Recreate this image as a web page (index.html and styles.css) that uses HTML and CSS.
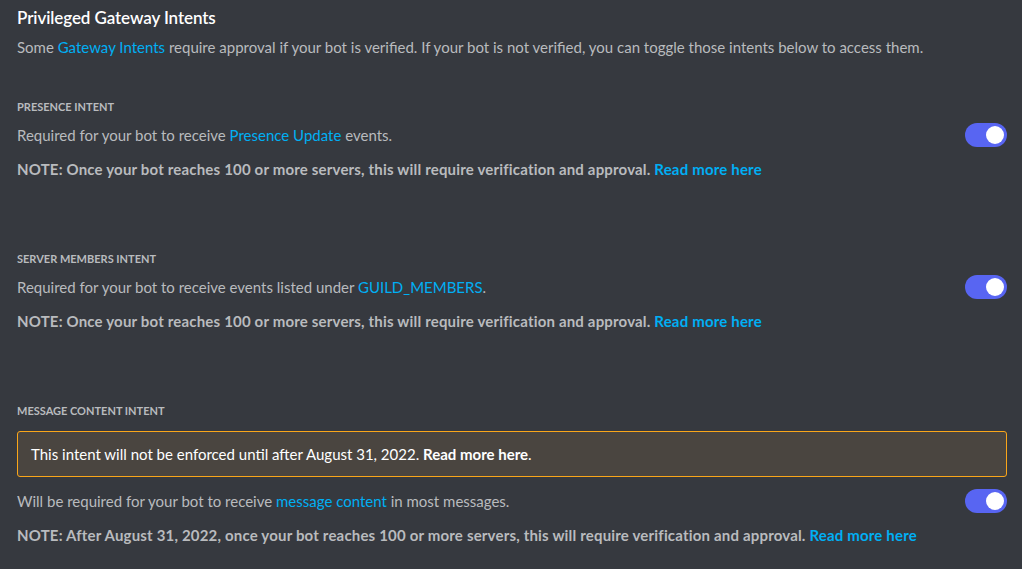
FILE: index.html
```html
<!DOCTYPE html>
<html>
<head>
<meta charset="utf-8">
<link rel="stylesheet" href="styles.css">
</head>
<body>
<main class="page">
  <header class="intro">
    <h2 class="title">Privileged Gateway Intents</h2>
    <p class="desc">Some <a class="link">Gateway Intents</a> require approval if your bot is verified. If your bot is not verified, you can toggle those intents below to access them.</p>
  </header>

  <section class="intent">
    <h3 class="label">PRESENCE INTENT</h3>
    <div class="row">
      <p class="desc">Required for your bot to receive <a class="link">Presence Update</a> events.</p>
      <span class="toggle"><span class="knob"></span></span>
    </div>
    <p class="note">NOTE: Once your bot reaches 100 or more servers, this will require verification and approval. <a class="link">Read more here</a></p>
  </section>

  <section class="intent">
    <h3 class="label">SERVER MEMBERS INTENT</h3>
    <div class="row">
      <p class="desc">Required for your bot to receive events listed under <a class="link">GUILD_MEMBERS</a>.</p>
      <span class="toggle"><span class="knob"></span></span>
    </div>
    <p class="note">NOTE: Once your bot reaches 100 or more servers, this will require verification and approval. <a class="link">Read more here</a></p>
  </section>

  <section class="intent intent-last">
    <h3 class="label">MESSAGE CONTENT INTENT</h3>
    <div class="warning">This intent will not be enforced until after August 31, 2022. <strong class="strong">Read more here</strong>.</div>
    <div class="row">
      <p class="desc">Will be required for your bot to receive <a class="link">message content</a> in most messages.</p>
      <span class="toggle"><span class="knob"></span></span>
    </div>
    <p class="note">NOTE: After August 31, 2022, once your bot reaches 100 or more servers, this will require verification and approval. <a class="link">Read more here</a></p>
  </section>
</main>
</body>
</html>
```

FILE: styles.css
```css
html, body {
  margin: 0;
  padding: 0;
  background: #36393f;
}
body {
  font-family: Lato, "Noto Sans", sans-serif;
  color: #b9bbbe;
}
.page {
  padding: 6px 15px 0 17px;
  display: flex;
  flex-direction: column;
  gap: 42px;
}
.intro {
  display: flex;
  flex-direction: column;
  gap: 7px;
}
.title {
  margin: 0;
  font-size: 17px;
  line-height: 24px;
  font-weight: 600;
  letter-spacing: -0.1px;
  color: #ffffff;
}
.desc {
  margin: 0;
  font-size: 15px;
  line-height: 20px;
  color: #b9bbbe;
}
.link {
  color: #00aff4;
  text-decoration: none;
}
.intent {
  display: flex;
  flex-direction: column;
}
.intent + .intent {
  margin-top: 30px;
}
.label {
  margin: 0 0 8px;
  font-size: 11px;
  line-height: 16px;
  font-weight: 700;
  color: #b9bbbe;
}
.intent-last .label {
  margin-bottom: 12px;
}
.row {
  display: flex;
  align-items: center;
  justify-content: space-between;
  height: 24px;
}
.note {
  margin: 12px 0 0;
  font-size: 15px;
  line-height: 20px;
  font-weight: 700;
  letter-spacing: 0.18px;
  color: #b9bbbe;
}
.toggle {
  width: 42px;
  height: 24px;
  border-radius: 12px;
  background: #5865f2;
  display: flex;
  align-items: center;
  justify-content: flex-end;
  padding: 0 3px;
  box-sizing: border-box;
}
.knob {
  width: 18px;
  height: 18px;
  border-radius: 50%;
  background: #ffffff;
}
.warning {
  border: 1px solid #faa61a;
  border-radius: 3px;
  background: #4a4540;
  padding: 12px 13px;
  font-size: 15px;
  line-height: 20px;
  color: #ffffff;
  margin-bottom: 12px;
}
.strong {
  font-weight: 700;
}
```
